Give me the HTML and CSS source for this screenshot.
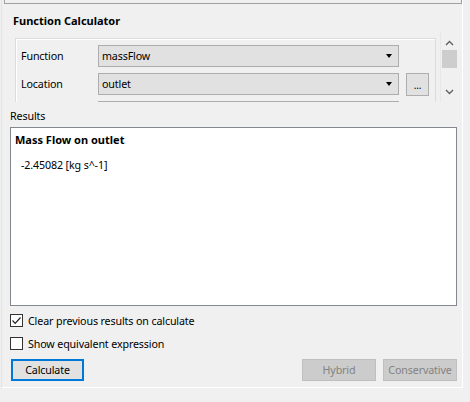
FILE: index.html
```html
<!DOCTYPE html>
<html>
<head>
<meta charset="utf-8">
<link rel="stylesheet" href="styles.css">
</head>
<body>
<div class="panel">
  <div class="topbox"></div>
  <div class="title">Function Calculator</div>
  <div class="scrollarea">
    <div class="scrollcontent">
      <div class="groupbox">
        <div class="row">
          <span class="label">Function</span>
          <div class="combo"><span>massFlow</span><span class="arrow"></span></div>
        </div>
        <div class="row">
          <span class="label">Location</span>
          <div class="combo"><span>outlet</span><span class="arrow"></span></div>
          <div class="dots">...</div>
        </div>
        <div class="row">
          <span class="label"></span>
          <div class="combo"><span></span><span class="arrow"></span></div>
        </div>
      </div>
    </div>
    <div class="scrollbar">
      <svg class="sarrow" width="9" height="6" viewBox="0 0 9 6"><path d="M1 5 L4.5 1.5 L8 5" fill="none" stroke="#606060" stroke-width="1.4"/></svg>
      <div class="thumb"></div>
      <div class="track"></div>
      <svg class="sarrow" width="9" height="6" viewBox="0 0 9 6"><path d="M1 1 L4.5 4.5 L8 1" fill="none" stroke="#606060" stroke-width="1.4"/></svg>
    </div>
  </div>
  <div class="results-label">Results</div>
  <div class="results">
    <div class="res-title">Mass Flow on outlet</div>
    <div class="res-value">-2.45082 [kg s^-1]</div>
  </div>
  <label class="check">
    <span class="box"><svg width="11" height="11" viewBox="0 0 11 11"><path d="M1.5 5.5 L4.2 8.3 L9.5 2.5" fill="none" stroke="#222" stroke-width="1.2"/></svg></span>
    <span>Clear previous results on calculate</span>
  </label>
  <label class="check check2">
    <span class="box"></span>
    <span>Show equivalent expression</span>
  </label>
  <div class="buttons">
    <div class="btn primary">Calculate</div>
    <div class="spacer"></div>
    <div class="btn disabled hybrid">Hybrid</div>
    <div class="btn disabled cons">Conservative</div>
  </div>
</div>
</body>
</html>
```

FILE: styles.css
```css
html, body {
  margin: 0;
  padding: 0;
  background: #f0f0f0;
  width: 470px;
  height: 402px;
  overflow: hidden;
  font-family: "Noto Sans", "Open Sans", sans-serif;
  font-size: 10.7px;
  letter-spacing: -0.13px;
  color: #000;
}
.panel {
  margin-left: 1px;
  width: 460px;
  height: 387px;
  border-left: 1px solid #e3e3e3;
  border-right: 1px solid #ffffff;
  border-bottom: 1px solid #ffffff;
  box-sizing: content-box;
  display: flex;
  flex-direction: column;
}
.topbox {
  margin-left: 2px;
  height: 3px;
  border-left: 1px solid #a0a0a0;
  border-right: 1px solid #a0a0a0;
  border-bottom: 1px solid #a0a0a0;
}
.title {
  font-weight: bold;
  font-size: 11px;
  letter-spacing: 0;
  padding-left: 11px;
  margin-top: 4px;
  padding-top: 1px;
  height: 23px;
  line-height: 24px;
}
.scrollarea {
  height: 70px;
  margin-left: 8px;
  margin-right: 5px;
  display: flex;
  overflow: hidden;
}
.scrollcontent {
  flex: 1;
  padding-left: 5px;
  padding-right: 4px;
}
.groupbox {
  margin-top: 6px;
  border: 1px solid #dcdcdc;
  box-shadow: inset 1px 1px 0 #ffffff;
  padding: 6px 0 10px 4px;
  display: flex;
  flex-direction: column;
  gap: 6px;
}
.row {
  display: flex;
  align-items: center;
  height: 22px;
}
.label {
  width: 77px;
  padding-left: 1px;
}
.combo {
  width: 301px;
  height: 22px;
  box-sizing: border-box;
  background: #e1e1e1;
  border: 1px solid #adadad;
  display: flex;
  align-items: center;
  justify-content: space-between;
  padding: 0 6px 0 3px;
}
.arrow {
  width: 0;
  height: 0;
  border-left: 3.5px solid transparent;
  border-right: 3.5px solid transparent;
  border-top: 4px solid #000;
}
.dots {
  margin-left: 7px;
  width: 23px;
  height: 23px;
  box-sizing: border-box;
  background: #e1e1e1;
  border: 1px solid #adadad;
  margin-top: 1px;
  text-align: center;
  font-size: 10px;
  line-height: 22px;
}
.scrollbar {
  width: 17px;
  border-left: 1px solid #e8e8e8;
  box-sizing: border-box;
  display: flex;
  flex-direction: column;
  align-items: center;
  padding-top: 8px;
}
.sarrow {
  display: block;
}
.thumb {
  margin-top: 4px;
  width: 15px;
  height: 18px;
  background: #cdcdcd;
}
.track {
  height: 21px;
}
.results-label {
  height: 22px;
  padding-top: 3px;
  line-height: 22px;
  padding-left: 8px;
}
.results {
  margin-left: 8px;
  width: 447px;
  height: 179px;
  box-sizing: border-box;
  background: #fff;
  border: 1px solid #828790;
  padding: 3px 0 0 4px;
}
.res-title {
  font-weight: bold;
  font-size: 11px;
  letter-spacing: 0;
  line-height: 18px;
}
.res-value {
  margin-top: 7px;
  padding-left: 6px;
  line-height: 18px;
}
.check {
  display: flex;
  align-items: center;
  margin-left: 8px;
  margin-top: 8px;
  height: 13px;
  gap: 5px;
}
.check2 {
  margin-top: 10px;
}
.box {
  width: 13px;
  height: 13px;
  box-sizing: border-box;
  border: 1px solid #333;
  background: #fff;
  display: flex;
  align-items: center;
  justify-content: center;
}
.box svg {
  display: block;
}
.buttons {
  display: flex;
  margin-top: 9px;
  margin-left: 9px;
  margin-right: 5px;
  height: 22px;
}
.spacer {
  flex: 1;
}
.btn {
  box-sizing: border-box;
  height: 22px;
  display: flex;
  align-items: center;
  justify-content: center;
  background: #e1e1e1;
  border: 1px solid #adadad;
}
.primary {
  width: 73px;
  border: 2px solid #0078d7;
}
.disabled {
  background: #cccccc;
  border-color: #bfbfbf;
  color: #838383;
}
.hybrid {
  width: 74px;
}
.cons {
  width: 74px;
  margin-left: 7px;
}
```
